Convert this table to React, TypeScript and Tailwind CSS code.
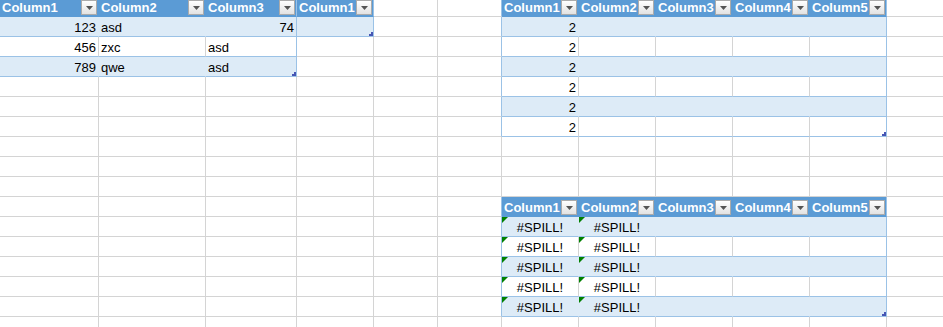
import React from 'react';

interface Table {
  r0: number;
  c0: number;
  headers: string[];
  rows: string[][];
}

const colWidths = ['w-[99px]', 'w-[107px]', 'w-[91px]', 'w-[77px]', 'w-[64px]', 'w-[64px]', 'w-[77px]', 'w-[77px]', 'w-[77px]', 'w-[77px]', 'w-[77px]', 'w-[77px]'];
const ROWS = 17;

const five = ['Column1', 'Column2', 'Column3', 'Column4', 'Column5'];

const tables: Table[] = [
  {
    r0: 0,
    c0: 0,
    headers: ['Column1', 'Column2', 'Column3'],
    rows: [
      ['123', 'asd', '74'],
      ['456', 'zxc', 'asd'],
      ['789', 'qwe', 'asd'],
    ],
  },
  { r0: 0, c0: 3, headers: ['Column1'], rows: [['']] },
  { r0: 0, c0: 6, headers: five, rows: Array.from({ length: 6 }, () => ['2', '', '', '', '']) },
  { r0: 10, c0: 6, headers: five, rows: Array.from({ length: 5 }, () => ['#SPILL!', '#SPILL!', '', '', '']) },
];

const inTable = (t: Table, r: number, c: number) =>
  r >= t.r0 && r <= t.r0 + t.rows.length && c >= t.c0 && c < t.c0 + t.headers.length;

const FilterButton: React.FC = () => (
  <div className="mb-[1px] mr-[1px] flex h-[15px] w-[16px] shrink-0 items-center justify-center border border-[#ababab] bg-gradient-to-b from-white to-[#e2e2e2]">
    <svg width="7" height="4" viewBox="0 0 7 4">
      <path d="M0 0h7L3.5 4z" fill="#545454" />
    </svg>
  </div>
);

const Cell: React.FC<{ r: number; c: number }> = ({ r, c }) => {
  const t = tables.find((x) => inTable(x, r, c));
  const leftOf = tables.some(
    (x) => c === x.c0 - 1 && r >= x.r0 && r <= x.r0 + x.rows.length
  );
  const w = colWidths[c];

  if (t && r === t.r0) {
    const last = c === t.c0 + t.headers.length - 1;
    return (
      <div
        className={`${w} flex h-[20px] shrink-0 items-end justify-between border-r border-b border-b-[#5b9bd5] bg-[#5b9bd5] pl-[2px] leading-[16px] font-bold text-white ${
          last ? 'border-r-[#9bc2e6]' : 'border-r-[#5b9bd5]'
        }`}
      >
        <span className="whitespace-nowrap">{t.headers[c - t.c0]}</span>
        <FilterButton />
      </div>
    );
  }

  if (t) {
    const i = r - t.r0 - 1;
    const band = i % 2 === 0;
    const last = c === t.c0 + t.headers.length - 1;
    const bottom = i === t.rows.length - 1 && last;
    const text = t.rows[i][c - t.c0];
    const isErr = text.startsWith('#');
    const isNum = /^\d+$/.test(text);
    const right = last
      ? 'border-r-[#9bc2e6]'
      : band
      ? 'border-r-[#ddebf7]'
      : 'border-r-[#d4d4d4]';
    const align = isErr ? 'justify-center' : isNum ? 'justify-end pr-[2px]' : 'justify-start pl-[2px]';
    return (
      <div
        className={`${w} relative flex h-[20px] shrink-0 items-end border-r border-b border-b-[#9bc2e6] leading-[16px] text-black ${right} ${align} ${
          band ? 'bg-[#ddebf7]' : 'bg-white'
        }`}
      >
        {isErr && (
          <svg className="absolute left-0 top-0" width="6" height="6" viewBox="0 0 6 6">
            <path d="M0 0h6L0 6z" fill="#008000" />
          </svg>
        )}
        <span className="whitespace-nowrap">{text}</span>
        {bottom && (
          <svg className="absolute bottom-0 right-0" width="4" height="4" viewBox="0 0 4 4">
            <path d="M2 0h2v4H0V2h2z" fill="#4656b4" />
          </svg>
        )}
      </div>
    );
  }

  return (
    <div
      className={`${w} h-[20px] shrink-0 border-r border-b border-b-[#d4d4d4] bg-white ${
        leftOf ? 'border-r-[#9bc2e6]' : 'border-r-[#d4d4d4]'
      }`}
    />
  );
};

const App: React.FC = () => {
  return (
    <div className="h-[327px] w-[943px] overflow-hidden bg-white font-['Liberation_Sans',Arial,sans-serif] text-[13px]">
      <div className="-mt-[3px] flex flex-col">
        {Array.from({ length: ROWS }, (_, r) => (
          <div key={r} className="flex">
            {colWidths.map((_, c) => (
              <Cell key={c} r={r} c={c} />
            ))}
          </div>
        ))}
      </div>
    </div>
  );
};

export default App;
